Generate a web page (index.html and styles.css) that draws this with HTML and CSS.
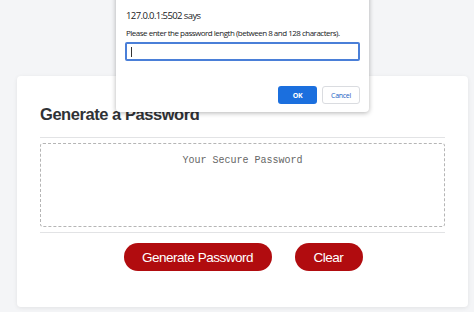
FILE: index.html
```html
<!DOCTYPE html>
<html>
<head>
<meta charset="utf-8">
<link rel="stylesheet" href="styles.css">
</head>
<body>
<div class="page">
  <div class="card">
    <h2 class="title">Generate a Password</h2>
    <hr class="rule">
    <div class="output">
      <span class="placeholder">Your Secure Password</span>
    </div>
    <hr class="rule rule-bottom">
    <div class="actions">
      <button class="btn btn-generate">Generate Password</button>
      <button class="btn btn-clear">Clear</button>
    </div>
  </div>
</div>
<div class="dialog">
  <div class="dialog-origin">127.0.0.1:5502 says</div>
  <div class="dialog-msg">Please enter the password length (between 8 and 128 characters).</div>
  <div class="dialog-input"><span class="caret"></span></div>
  <div class="dialog-buttons">
    <button class="dbtn dbtn-ok">OK</button>
    <button class="dbtn dbtn-cancel">Cancel</button>
  </div>
</div>
</body>
</html>
```

FILE: styles.css
```css
* { box-sizing: border-box; }
html, body { margin: 0; padding: 0; }
body {
  background: #f4f5f7;
  width: 474px;
  height: 312px;
  overflow: hidden;
  position: relative;
  font-family: "Liberation Sans", Arial, sans-serif;
}
.page {
  padding: 76px 6px 0 17px;
}
.card {
  width: 451px;
  height: 231px;
  background: #ffffff;
  border-radius: 4px;
  box-shadow: 0 1px 4px rgba(0,0,0,0.08);
  padding: 28px 23px 0 23px;
}
.title {
  margin: 0;
  font-size: 16.5px;
  line-height: 21px;
  letter-spacing: -0.45px;
  font-weight: bold;
  color: #303236;
}
.rule {
  border: 0;
  border-top: 1px solid #e2e3e5;
  margin: 12px 0 5px 0;
}
.rule-bottom {
  margin: 5px 0 10px 0;
}
.output {
  height: 84px;
  border: 1.5px dashed #b5b5b5;
  border-radius: 3px;
  display: flex;
  justify-content: center;
  padding-top: 11px;
}
.placeholder {
  font-family: "Liberation Mono", "DejaVu Sans Mono", monospace;
  font-size: 10px;
  color: #666666;
  height: 14px;
}
.actions {
  display: flex;
  justify-content: center;
  gap: 23px;
  padding-left: 1px;
}
.btn {
  height: 28px;
  border: 0;
  border-radius: 14px;
  background: #b10c0f;
  color: #ffffff;
  font-family: "Liberation Sans", Arial, sans-serif;
  font-size: 13.5px;
  letter-spacing: -0.5px;
  padding: 0;
}
.btn-generate { width: 148px; }
.btn-clear { width: 68px; }

.dialog {
  position: absolute;
  left: 116px;
  top: -6px;
  width: 253px;
  height: 118px;
  background: #ffffff;
  border-radius: 0 0 4px 4px;
  box-shadow: 0 1px 5px rgba(0,0,0,0.3);
  padding: 15px 9px 0 9px;
  font-family: "Open Sans", "Noto Sans", sans-serif;
  color: #202124;
}
.dialog-origin {
  font-size: 9.5px;
  line-height: 14px;
  letter-spacing: -0.6px;
  padding-left: 1px;
}
.dialog-msg {
  margin-top: 4px;
  font-size: 8px;
  line-height: 12px;
  letter-spacing: -0.5px;
  padding-left: 1px;
  white-space: nowrap;
}
.dialog-input {
  margin-top: 3px;
  height: 19px;
  border: 2px solid #4a7fd8;
  border-radius: 2px;
  padding: 3px 0 0 4px;
}
.caret {
  display: block;
  width: 1px;
  height: 10px;
  background: #333;
}
.dialog-buttons {
  display: flex;
  justify-content: flex-end;
  gap: 5px;
  margin-top: 25px;
}
.dbtn {
  height: 18px;
  border-radius: 3px;
  font-family: "Open Sans", "Noto Sans", sans-serif;
  font-size: 7px;
  letter-spacing: -0.3px;
  padding: 0;
}
.dbtn-ok {
  width: 39px;
  background: #1b6fde;
  border: 0;
  color: #ffffff;
  font-weight: bold;
}
.dbtn-cancel {
  width: 38px;
  background: #ffffff;
  border: 1px solid #dadce0;
  color: #1a5fc4;
}
```
